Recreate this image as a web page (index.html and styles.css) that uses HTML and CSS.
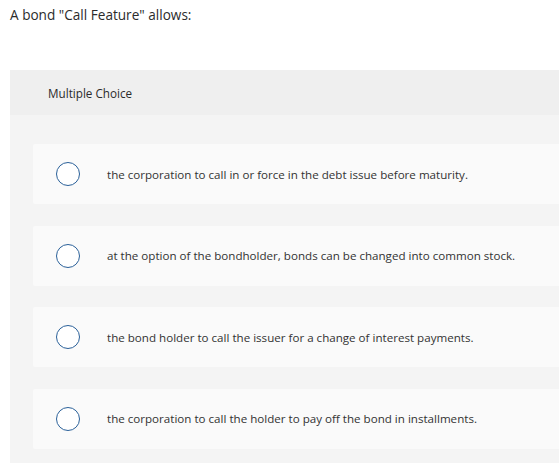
FILE: index.html
```html
<!DOCTYPE html>
<html>
<head>
<meta charset="utf-8">
<link rel="stylesheet" href="styles.css">
</head>
<body>
<div class="page">
  <p class="question">A bond "Call Feature" allows:</p>
  <div class="panel">
    <div class="panel-head">Multiple Choice</div>
    <div class="panel-body">
      <div class="choice"><span class="radio"></span><span class="label">the corporation to call in or force in the debt issue before maturity.</span></div>
      <div class="choice"><span class="radio"></span><span class="label">at the option of the bondholder, bonds can be changed into common stock.</span></div>
      <div class="choice"><span class="radio"></span><span class="label">the bond holder to call the issuer for a change of interest payments.</span></div>
      <div class="choice"><span class="radio"></span><span class="label">the corporation to call the holder to pay off the bond in installments.</span></div>
    </div>
  </div>
</div>
</body>
</html>
```
FILE: styles.css
```css
html, body {
  margin: 0;
  padding: 0;
  background: #ffffff;
  overflow: hidden;
}
.page {
  width: 559px;
  height: 464px;
  font-family: "Open Sans", "Liberation Sans", Arial, sans-serif;
  color: #333333;
}
.question {
  margin: 0;
  padding: 6px 0 0 10px;
  font-size: 13.6px;
  line-height: 18px;
  height: 70px;
  box-sizing: border-box;
  color: #2b2b2b;
}
.panel {
  margin-left: 10px;
  width: 549px;
  height: 393px;
  background: #f4f4f4;
}
.panel-head {
  height: 45px;
  background: #efefef;
  display: flex;
  align-items: center;
  padding-left: 38px;
  font-size: 11.7px;
  color: #2b2b2b;
}
.panel-body {
  padding: 29px 0 0 23px;
  display: flex;
  flex-direction: column;
  gap: 21.67px;
}
.choice {
  height: 60px;
  background: #fafafa;
  border-radius: 2px 0 0 2px;
  display: flex;
  align-items: center;
}
.radio {
  width: 22px;
  height: 22px;
  margin-left: 23px;
  border: 1.6px solid #2a6099;
  border-radius: 50%;
  background: #ffffff;
  flex: none;
}
.label {
  margin-left: 27px;
  font-size: 11.6px;
  color: #333333;
}
```
